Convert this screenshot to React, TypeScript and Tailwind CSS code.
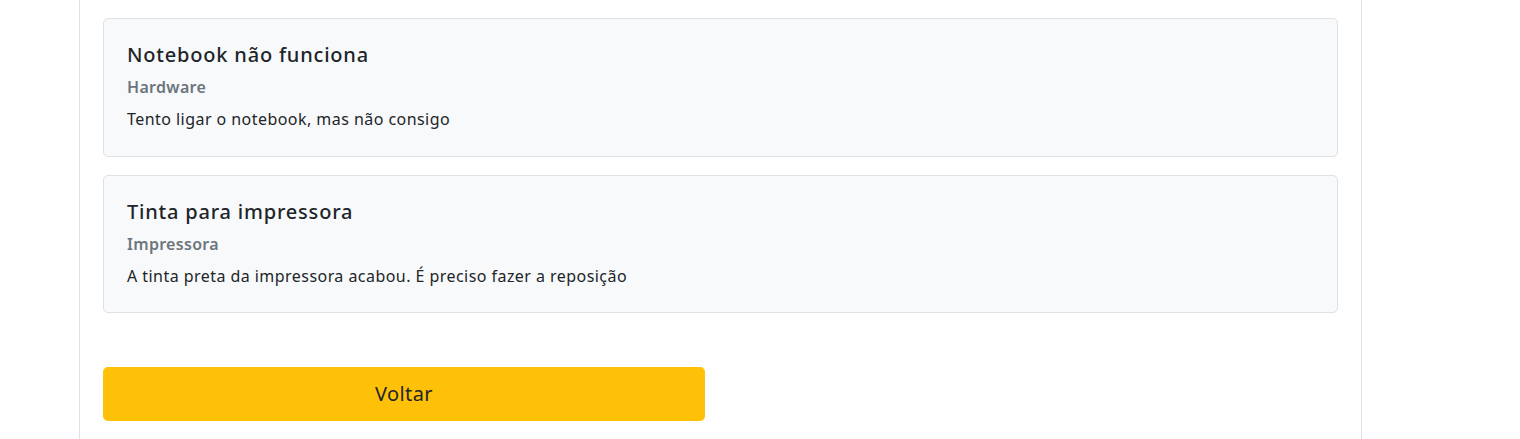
const cards = [
  { title: 'Notebook não funciona', cat: 'Hardware', text: 'Tento ligar o notebook, mas não consigo', pb: 'pb-[25px]' },
  { title: 'Tinta para impressora', cat: 'Impressora', text: 'A tinta preta da impressora acabou. É preciso fazer a reposição', pb: 'pb-6' },
];

export default function App() {
  return (
    <div className="min-h-[439px] bg-white text-[#212529]" style={{ fontFamily: '"Noto Sans", sans-serif' }}>
      <div className="ml-[79px] w-[1283px] min-h-[439px] border-x border-[#dee2e6] px-[23px] pt-[18px] pb-6">
        <div className="flex flex-col gap-[18px]">
          {cards.map((c) => (
            <div key={c.title} className={`rounded-[5px] border border-[#dee2e6] bg-[#f8f9fa] pl-[23px] pr-6 pt-6 ${c.pb}`}>
              <div className="mb-2 text-[20px] font-medium leading-6 tracking-[0.8px]">{c.title}</div>
              <div className="mb-2 text-[16px] font-semibold leading-6 tracking-[0.3px] text-[#6c757d]">{c.cat}</div>
              <div className="text-[16px] leading-6 tracking-[0.45px]">{c.text}</div>
            </div>
          ))}
        </div>
        <button className="mt-[54px] flex h-[54px] w-[602px] items-center justify-center rounded-[5px] bg-[#ffc107] text-[20px] tracking-[0.4px] text-[#212529]">
          Voltar
        </button>
      </div>
    </div>
  );
}
